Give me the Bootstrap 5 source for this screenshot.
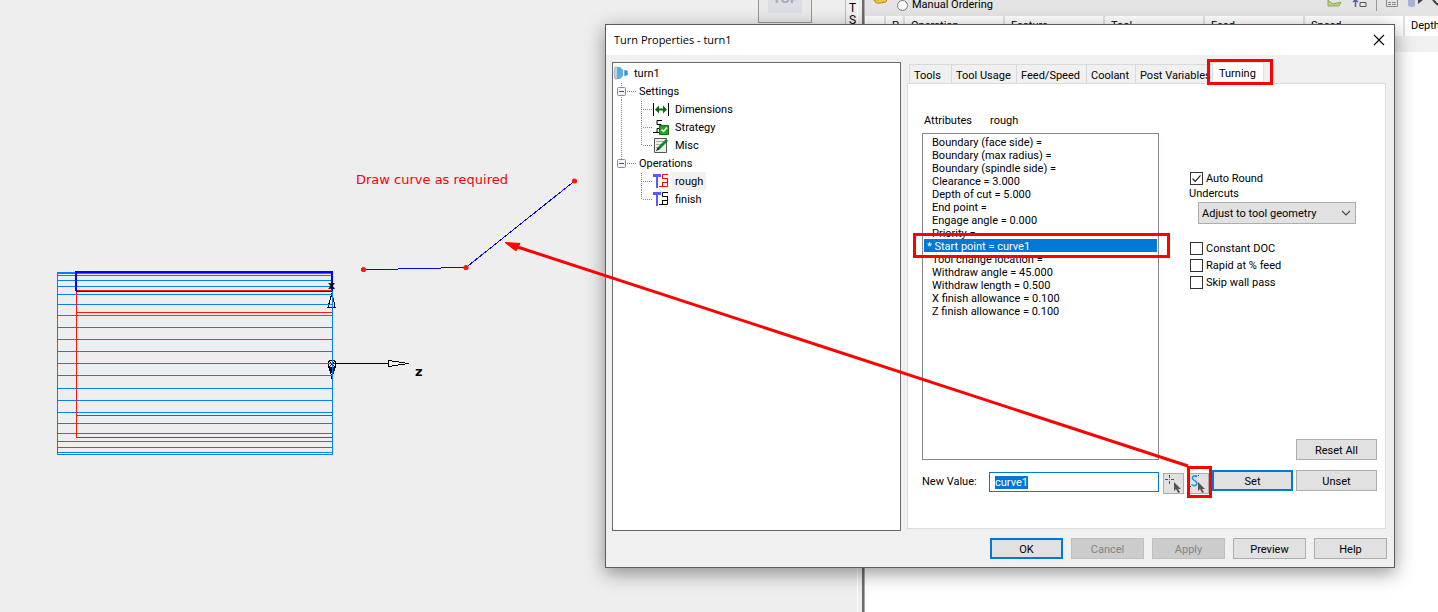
<!DOCTYPE html>
<html lang="en">
<head>
<meta charset="utf-8">
<meta name="viewport" content="width=device-width, initial-scale=1">
<title>Turn Properties - turn1</title>
<link href="https://cdn.jsdelivr.net/npm/bootstrap@5.3.0/dist/css/bootstrap.min.css" rel="stylesheet">
<style>
:root { --ui: Roboto, "Liberation Sans", sans-serif; --blue: #0078d7; }
body { font: 11px/14px var(--ui); color: #000; background: #eee; height: 100vh; overflow: hidden; }
.desktop { height: 100vh; }

/* drawing area */
.canvas { background: #eee; overflow: hidden; }
.scene { display: block; }
.scene text { font-family: "DejaVu Sans", sans-serif; }
.side-strip { width: 17px; border-right: 4px solid #eee; font-size: 12px; line-height: 12px; }
.side-top { height: 40px; padding: 2px 0 0 2px; background: #f0f0f0; border-left: 1px solid #bbb; }
.side-line { border-right: 1px solid #fff; }
.splitter { width: 3px; background: #6b6b6b; border-right: 1px solid #aaa; }

/* operation list behind the dialog */
.ops { width: 573px; background: #fff; }
.ops-bar { height: 16px; background: #e4e4e4; overflow: hidden; }
.ops-table { table-layout: fixed; width: 100%; }
.ops-table th { height: 20px; padding: 0 4px 0 6px; border-left: 2px solid #e3e3e3; font-weight: 400; white-space: nowrap; }
.ops-table td { height: 16px; background: #f0f0f0; }
.order-opt { margin-top: -6px; }
.order-opt input { appearance: none; width: 11px; height: 11px; border: 1px solid #777; border-radius: 50%; background: #fff; margin: 0 4px 0 0; }

/* dialog */
.dialog { position: absolute; left: 605px; right: 43px; top: 24px; background: #f0f0f0; border: 1px solid #5c5c5c; box-shadow: 0 5px 18px rgba(0,0,0,.42); }
.titlebar { height: 30px; background: #fff; padding: 0 9px 0 8px; font: 11px/30px "Open Sans", sans-serif; }
.close-x { border: 0; background: none; padding: 0; line-height: 0; }
.dialog-main { padding: 7px 8px 0 6px; gap: 6px; }
.tree { width: 289px; height: 469px; background: #fff; border: 1px solid #696969; padding: 1px 0; }
.tree-row { height: 18px; display: flex; align-items: center; }
.tree-row svg { flex: none; }
.tree-row span { padding: 2px 3px 0; line-height: 16px; }
.tree-row .picked { background: #f0f0f0; }

.tabstrip { display: grid; grid-template-columns: 42px 65px 70px 49px 77px 52px; align-items: end; height: 22px; padding-left: 2px; margin-bottom: -1px; border: 0; position: relative; }
.tabstrip .nav-link { width: 100%; height: 19px; padding: 0 0 0 4px; margin: 0 0 1px; border: 1px solid #d9d9d9; border-width: 1px 0 0 1px; border-radius: 0; background: #f0f0f0; color: #000; text-align: left; line-height: 21px; white-space: nowrap; }
.tabstrip .nav-link.active { height: 22px; margin: 0; padding-left: 6px; border-right-width: 1px; background: #fff; color: #000; }
.pane { background: #fff; border: 1px solid #dcdcdc; padding: 28px 8px 34px 14px; }
.attr-head { height: 16px; margin-bottom: 5px; padding-left: 2px; gap: 18px; line-height: 18px; }
.pane-body { gap: 30px; }
.attr-list { height: 327px; border: 1px solid #828790; border-radius: 0; padding: 1px; }
.attr-list li { height: 13px; line-height: 15px; padding: 0 0 0 8px; border: 0; border-radius: 0; color: #000; white-space: pre; }
.attr-list li.list-group-item + li.active { margin-top: 0; border: 0; }
.attr-list li.active { background: var(--blue); color: #fff; padding-left: 3px; }
.options { width: 188px; padding: 37px 0 0 1px; }
.undercuts { line-height: 13px; margin-bottom: 2px; margin-left: -1px; }
.tick { height: 17px; gap: 3px; }
.tick input { appearance: none; width: 13px; height: 13px; margin: 0; border: 1px solid #333; background: #fff; }
.tick input:checked { background: #fff url("data:image/svg+xml,%3Csvg xmlns='http://www.w3.org/2000/svg' viewBox='0 0 11 11'%3E%3Cpath d='M1.5 5.5l2.8 2.8 5.2-6' fill='none' stroke='%23222' stroke-width='1.2'/%3E%3C/svg%3E"); }
.adjust { width: 158px; height: 22px; margin-left: 8px; padding: 1px 20px 0 3px; font: inherit; color: #000; border: 1px solid #adadad; border-radius: 0; background: #e1e1e1 url("data:image/svg+xml,%3Csvg xmlns='http://www.w3.org/2000/svg' viewBox='0 0 10 10'%3E%3Cpath d='M1 3l4 4 4-4' fill='none' stroke='%23444' stroke-width='1.1'/%3E%3C/svg%3E") no-repeat right 4px center / 10px 10px; }
.push { height: 21px; width: 81px; padding: 0; font: inherit; line-height: 21px; color: #000; background: #e1e1e1; border: 1px solid #adadad; border-radius: 0; }
.push.main { border: 2px solid var(--blue); line-height: 19px; }
.push:disabled { background: #ccc; border-color: #bfbfbf; color: #838383; opacity: 1; }
.pick { width: 21px; height: 21px; margin: 3px 0 0 4px; padding: 0; border: 1px solid #adadad; background: #e1e1e1; line-height: 0; }
.value-row { margin-top: 10px; height: 24px; }
.value-row .push { margin-left: 3px; }
.value-row label { width: 67px; line-height: 23px; }
.value-row input { height: 20px; min-height: 0; margin-top: 2px; padding: 0 5px; font: inherit; border: 1px solid var(--blue); border-radius: 0; box-shadow: none; color: #000; }
.value-row input:focus { box-shadow: none; border-color: var(--blue); color: #000; }
.value-row input::selection { background: var(--blue); color: #fff; }
.foot { padding: 7px 7px 8px; gap: 8px; }
.foot .push { width: 73px; }
.marks { position: absolute; left: 0; top: 0; pointer-events: none; }
</style>
</head>
<body>
<main class="desktop d-flex">
  <section class="canvas flex-grow-1 d-flex justify-content-between">
    <svg class="scene flex-shrink-0" width="845" height="612" shape-rendering="crispEdges" fill="none">
      <g>
        <rect x="758.5" y="-5" width="53" height="27.500" stroke="#999" fill="#e9e9e9"/>
        <rect x="768" y="0" width="34" height="13" fill="#dcdee5"/>
        <text x="773" y="3" font-size="11" font-weight="bold" fill="#a9abb2">TOP</text>
      </g>
      <g stroke="#000">
        <path d="M332 293l-4 14h7l-3-14M332 363.500h56M388.500 360.500v6l20-3z"/>
        <circle cx="332" cy="364" r="4"/>
        <path d="M329 361l6 6m0-6l-6 6M329 368l3 9 3-9zM330 370h4M330 372h4M331 378h2" stroke-width="1.200"/>
      </g>
      <path stroke="#0080ff" d="M57.500 272v183M332.500 272v183M57 272.500h276M57 273.500h276M57 275.500h276M57 280.500h276M57 286.500h276M57 294.500h276M57 304.500h276M57 315.500h276M57 327.500h276M57 339.500h276M57 351.500h276M57 363.500h276M57 375.500h276M57 388.500h276M57 400.500h276M57 412.500h276M57 423.500h276M57 433.500h276M57 441.500h276M57 447.500h276M57 452.500h276M57 454.500h276"/>
      <path stroke="#f51a0a" d="M332 437.500H76.500V290.500H332M76 312.500h256M76 415.500h256"/>
      <path stroke="#00f" stroke-width="2" d="M76 291V272h256v19"/>
      <path stroke="#f51a0a" d="M77 290.500h255"/>
      <path stroke="#0000b0" d="M76 291.500h256"/>
      <text x="328" y="289" font-size="11" font-weight="bold" fill="#000">x</text>
      <text x="415" y="376" font-size="13" font-weight="bold" fill="#000">z</text>
      <path stroke="#00f" d="M363.500 269.500h34M398 268.500h43M441 267.500h25M466 267.500L574.500 181"/>
      <g fill="#f51a0a" shape-rendering="auto"><circle cx="363.500" cy="269.500" r="2.600"/><circle cx="466" cy="267.500" r="2.600"/><circle cx="574.500" cy="181" r="2.600"/></g>
      <text x="356" y="184" font-size="13" fill="#f00" shape-rendering="auto">Draw curve as required</text>
    </svg>
    <div class="side-strip text-center flex-shrink-0"><div class="side-line h-100"><div class="side-top">T<br>S</div></div></div>
  </section>
  <div class="splitter"></div>
  <section class="ops flex-shrink-0">
    <div class="ops-bar d-flex justify-content-between">
      <div class="d-flex">
        <svg width="32" height="8"><path d="M8 0h15v3H8z" fill="#eee"/><path d="M9 0q1 4 6 3l6-1 1-3z" fill="#f3c64c" stroke="#b98516"/></svg>
        <label class="order-opt d-flex align-items-center"><input type="radio" name="order"><span>Manual Ordering</span></label>
      </div>
      <svg width="112" height="16" fill="none">
        <path d="M2 0v6l5 0h6l2-4-4 1-4 1-3-2z" fill="#bfcf7a" stroke="#8fa85a"/>
        <path d="M29.500 7V0M27 2l2.500-2L32 2" stroke="#5558b0" stroke-width="1.500"/><path d="M34 2.500h6v4h-6z" stroke="#555"/>
        <path d="M50.500 0v11" stroke="#999"/>
        <path d="M60.500 -2v8.500h11V-2M62 2.500h3m1 0h4M62 4.500h3m1 0h4" stroke="#888"/>
        <path d="M82 0h7v6q-3 2-7 0z" fill="#a9afd9"/><path d="M92 4V-2l5 2z" fill="#444"/><path d="M107 0l5 5" stroke="#444" stroke-width="2"/>
      </svg>
    </div>
    <table class="ops-table">
      <colgroup><col style="width:20px"><col style="width:19px"><col style="width:100px"><col style="width:100px"><col style="width:100px"><col style="width:100px"><col style="width:100px"><col></colgroup>
      <thead><tr><th class="border-0"></th><th>P</th><th>Operation</th><th>Feature</th><th>Tool</th><th>Feed</th><th>Speed</th><th>Depth</th></tr></thead>
      <tbody><tr><td colspan="8"></td></tr></tbody>
    </table>
  </section>
</main>

<div class="dialog" role="dialog" aria-label="Turn Properties - turn1">
  <div class="titlebar d-flex justify-content-between align-items-center">
    <span>Turn Properties - turn1</span>
    <button type="button" class="close-x" aria-label="Close"><svg width="12" height="12"><path d="M1 1l10 10M11 1L1 11" stroke="#000" stroke-width="1.100"/></svg></button>
  </div>

  <div class="dialog-main d-flex">
    <div class="tree flex-shrink-0">
      <div class="tree-row">
        <svg width="18" height="18" fill="none"><path d="M2 3h3l-1 12H2Q0 9 2 3z" fill="#c6d3dc" stroke="#a9b8c2"/><path d="M4 3h3l3 3v6l-3 3H4z" fill="#5aaee4"/><path d="M10 6h1v6h-1z" fill="#fff"/><path d="M11 6h2l2 1v4l-2 1h-2z" fill="#6ab9ec"/><path d="M12 7h2v4h-2z" fill="#3d8ccb"/></svg>
        <span>turn1</span>
      </div>
      <div class="tree-row">
        <svg width="23" height="18" fill="none"><path d="M8.500 1v4M8.500 13v5M14 9.500h9" stroke="#888" stroke-dasharray="1 1"/><rect x="4.500" y="5.500" width="8" height="8" rx="1" fill="#f4f4f4" stroke="#8c8c8c"/><path d="M6 9.500h5" stroke="#2f55a4"/></svg>
        <span>Settings</span>
      </div>
      <div class="tree-row">
        <svg width="59" height="18" fill="none"><path d="M8.500 0v18M28.500 1v17M30 9.500h10" stroke="#888" stroke-dasharray="1 1"/><path d="M40.500 3v13M55.500 3v13" stroke="#000"/><path d="M42 9.500l4-4v3h4v-3l4 4-4 4v-3h-4v3z" fill="#0a6b12"/></svg>
        <span>Dimensions</span>
      </div>
      <div class="tree-row">
        <svg width="59" height="18" fill="none"><path d="M8.500 0v18M28.500 0v18M30 9.500h10" stroke="#888" stroke-dasharray="1 1"/><path d="M49 2.500h-5v4h4v4h-4v4M40 14.500h8" stroke="#000"/><path d="M46.500 7.500h9v9h-9z" fill="#22a81c" stroke="#126c10"/><path d="M48.500 11.500l2 2 3.500-4" stroke="#fff" stroke-width="1.500"/></svg>
        <span>Strategy</span>
      </div>
      <div class="tree-row">
        <svg width="59" height="18" fill="none"><path d="M8.500 0v18M28.500 0v9M30 9.500h10" stroke="#888" stroke-dasharray="1 1"/><path d="M41.500 2.500h12v14h-12z" fill="#eee" stroke="#555"/><path d="M43 5.500h8M43 8.500h6M43 11.500h3" stroke="#aaa"/><path d="M43 15l2-4 8-8 2 2-8 8z" fill="#128a1a"/><path d="M43 15l2-4 2 2z" fill="#333"/></svg>
        <span>Misc</span>
      </div>
      <div class="tree-row">
        <svg width="23" height="18" fill="none"><path d="M8.500 0v5M14 9.500h9" stroke="#888" stroke-dasharray="1 1"/><rect x="4.500" y="5.500" width="8" height="8" rx="1" fill="#f4f4f4" stroke="#8c8c8c"/><path d="M6 9.500h5" stroke="#2f55a4"/></svg>
        <span>Operations</span>
      </div>
      <div class="tree-row">
        <svg width="59" height="18" fill="none"><path d="M28.500 1v17M30 9.500h10" stroke="#888" stroke-dasharray="1 1"/><path d="M40 2h8v3h-3v11h-2V5h-3z" fill="#5a5aff"/><path d="M55 2.500h-5.500v4h5v4h-5M54.500 6v8.500H46M49.500 10v4" stroke="#f00"/></svg>
        <span class="picked">rough</span>
      </div>
      <div class="tree-row">
        <svg width="59" height="18" fill="none"><path d="M28.500 0v9M30 9.500h10" stroke="#888" stroke-dasharray="1 1"/><path d="M40 2h8v3h-3v11h-2V5h-3z" fill="#5a5aff"/><path d="M55 2.500h-5.500v4h5v4h-5M54.500 6v8.500H46M49.500 10v4" stroke="#000"/></svg>
        <span>finish</span>
      </div>
    </div>

    <div class="flex-grow-1">
      <div class="tabstrip nav nav-tabs" role="tablist">
        <button type="button" class="nav-link" role="tab">Tools</button>
        <button type="button" class="nav-link" role="tab">Tool Usage</button>
        <button type="button" class="nav-link" role="tab">Feed/Speed</button>
        <button type="button" class="nav-link" role="tab">Coolant</button>
        <button type="button" class="nav-link" role="tab">Post Variables</button>
        <button type="button" class="nav-link active" role="tab" aria-selected="true">Turning</button>
      </div>
      <div class="pane">
        <div class="attr-head d-flex"><span>Attributes</span><span>rough</span></div>
        <div class="pane-body d-flex">
          <ul class="attr-list list-group flex-grow-1 mb-0" role="listbox" aria-label="Attributes">
            <li class="list-group-item" role="option">Boundary (face side) =</li>
            <li class="list-group-item" role="option">Boundary (max radius) =</li>
            <li class="list-group-item" role="option">Boundary (spindle side) =</li>
            <li class="list-group-item" role="option">Clearance = 3.000</li>
            <li class="list-group-item" role="option">Depth of cut = 5.000</li>
            <li class="list-group-item" role="option">End point =</li>
            <li class="list-group-item" role="option">Engage angle = 0.000</li>
            <li class="list-group-item" role="option">Priority =</li>
            <li class="list-group-item active" role="option" aria-selected="true">* Start point = curve1</li>
            <li class="list-group-item" role="option">Tool change location =</li>
            <li class="list-group-item" role="option">Withdraw angle = 45.000</li>
            <li class="list-group-item" role="option">Withdraw length = 0.500</li>
            <li class="list-group-item" role="option">X finish allowance = 0.100</li>
            <li class="list-group-item" role="option">Z finish allowance = 0.100</li>
          </ul>
          <div class="options d-flex flex-column">
            <label class="tick d-flex align-items-center"><input type="checkbox" checked>Auto Round</label>
            <label for="undercuts" class="undercuts">Undercuts</label>
            <select id="undercuts" class="adjust form-select mb-3"><option>Adjust to tool geometry</option></select>
            <label class="tick d-flex align-items-center"><input type="checkbox">Constant DOC</label>
            <label class="tick d-flex align-items-center"><input type="checkbox">Rapid at % feed</label>
            <label class="tick d-flex align-items-center"><input type="checkbox">Skip wall pass</label>
            <button type="button" class="push btn mt-auto align-self-end">Reset All</button>
          </div>
        </div>
        <div class="value-row d-flex align-items-start">
          <label for="newvalue">New Value:</label>
          <input id="newvalue" type="text" class="form-control flex-grow-1 w-auto" value="curve1">
          <button type="button" class="pick" aria-label="Pick point"><svg width="19" height="19"><path d="M5.500 1v3m0 3v3M1 5.500h3m3 0h3" stroke="#555"/><path d="M5 5h1v1H5z" fill="#1e90e8"/><path d="M10 8v9l2-2 2 4 2-1-2-3h3z" fill="#555"/></svg></button>
          <button type="button" class="pick" aria-label="Pick curve"><svg width="19" height="19"><path d="M8 3Q7 1.500 5 2 2.500 3 4 5.500l3 2Q9 10 6.500 11.500q-2 .5-4-1" fill="none" stroke="#1e90e8" stroke-width="1.500"/><path d="M9 1h1v1H9zM1 12h1v1H1z" fill="#444"/><path d="M9 8v9l2-2 2 4 2-1-2-3h3z" fill="#555"/></svg></button>
          <button type="button" class="push main btn">Set</button>
          <button type="button" class="push btn">Unset</button>
        </div>
      </div>
    </div>
  </div>

  <div class="foot d-flex justify-content-end">
    <button type="button" class="push main btn">OK</button>
    <button type="button" class="push btn" disabled>Cancel</button>
    <button type="button" class="push btn" disabled>Apply</button>
    <button type="button" class="push btn">Preview</button>
    <button type="button" class="push btn">Help</button>
  </div>
</div>

<svg class="marks" width="1438" height="612" fill="none" stroke="#f00" stroke-width="3">
  <rect x="1208.500" y="60.500" width="63" height="23"/>
  <rect x="914.500" y="234.500" width="254" height="22"/>
  <rect x="1188.500" y="467.500" width="22" height="29"/>
  <path d="M1188 466L516 246.500"/>
  <path d="M505 242.500l15 1-4 7.500z" fill="#f00" stroke-width="1"/>
</svg>

<script src="https://cdn.jsdelivr.net/npm/bootstrap@5.3.0/dist/js/bootstrap.bundle.min.js"></script>
<script>
  const field = document.getElementById('newvalue');
  field.focus();
  field.select();
</script>
</body>
</html>
